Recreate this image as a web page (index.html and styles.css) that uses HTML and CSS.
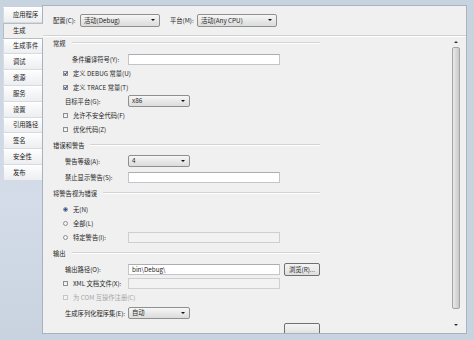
FILE: index.html
```html
<!doctype html>
<html lang="zh-CN">
<head>
  <meta charset="UTF-8">
  <title>项目属性 - 生成</title>
  <link rel="stylesheet" href="styles.css">
</head>
<body>
  <div class="window">
    <div class="sidebar">
      <div class="tab">应用程序</div>
      <div class="tab tab-active">生成</div>
      <div class="tab">生成事件</div>
      <div class="tab">调试</div>
      <div class="tab">资源</div>
      <div class="tab">服务</div>
      <div class="tab">设置</div>
      <div class="tab">引用路径</div>
      <div class="tab">签名</div>
      <div class="tab">安全性</div>
      <div class="tab">发布</div>
    </div>

    <div class="panel">
      <div class="toolbar">
        <span class="tool-label">配置(C):</span>
        <div class="select select-wide">活动(Debug)</div>
        <span class="tool-label tool-label-2">平台(M):</span>
        <div class="select select-wide">活动(Any CPU)</div>
      </div>

      <div class="body">
        <div class="content">
          <div class="section section-first"><span>常规</span><i class="rule"></i></div>
          <div class="row field">
            <span class="label label-indent">条件编译符号(Y):</span>
            <div class="textbox"></div>
          </div>
          <div class="row check"><span class="box checked"></span>定义 DEBUG 常量(U)</div>
          <div class="row check"><span class="box checked"></span>定义 TRACE 常量(T)</div>
          <div class="row field">
            <span class="label">目标平台(G):</span>
            <div class="select">x86</div>
          </div>
          <div class="row check"><span class="box"></span>允许不安全代码(F)</div>
          <div class="row check"><span class="box"></span>优化代码(Z)</div>

          <div class="section"><span>错误和警告</span><i class="rule"></i></div>
          <div class="row field">
            <span class="label">警告等级(A):</span>
            <div class="select">4</div>
          </div>
          <div class="row field mt2">
            <span class="label">禁止显示警告(S):</span>
            <div class="textbox"></div>
          </div>

          <div class="section"><span>将警告视为错误</span><i class="rule"></i></div>
          <div class="row check"><span class="radio selected"></span>无(N)</div>
          <div class="row check"><span class="radio"></span>全部(L)</div>
          <div class="row check">
            <span class="radio"></span><span class="label-short">特定警告(I):</span>
            <div class="textbox disabled"></div>
          </div>

          <div class="section"><span>输出</span><i class="rule"></i></div>
          <div class="row field">
            <span class="label">输出路径(O):</span>
            <div class="textbox">bin\Debug\</div>
            <div class="button">浏览(R)...</div>
          </div>
          <div class="row check">
            <span class="box"></span><span class="label-short">XML 文档文件(X):</span>
            <div class="textbox disabled"></div>
          </div>
          <div class="row check is-disabled"><span class="box"></span>为 COM 互操作注册(C)</div>
          <div class="row field mt2">
            <span class="label">生成序列化程序集(E):</span>
            <div class="select">自动</div>
          </div>
          <div class="row button-row">
            <div class="button"></div>
          </div>
        </div>

        <div class="scrollbar">
          <span class="arrow arrow-up"></span>
          <div class="thumb"></div>
          <span class="arrow arrow-down"></span>
        </div>
      </div>
    </div>
  </div>
</body>
</html>
```

FILE: styles.css
```css
html, body {
    margin: 0;
    height: 340px;
    overflow: hidden;
}

body {
    background: #c8d3e0;
    font-family: "Noto Sans CJK SC", "Noto Sans", sans-serif;
    font-size: 6.3px;
    color: #262626;
}

.window {
    display: flex;
    height: 340px;
    box-sizing: border-box;
    padding: 5px 7px 6px 0;
}

/* left tabs */
.sidebar {
    width: 42px;
    padding-top: 2px;
    padding-left: 3px;
    box-sizing: border-box;
    background: linear-gradient(#c8d3e0, #d3dce8 60%, #c9d3df);
}

.tab {
    height: 15.8px;
    box-sizing: border-box;
    display: flex;
    align-items: center;
    padding-left: 9px;
    background: linear-gradient(#fdfdfd, #eceef1);
    border: 1px solid #d6dbe2;
    border-right: none;
    border-top-color: #fff;
    color: #1a1a1a;
    line-height: 1;
}

.tab-active {
    background: #f0f0f0;
    border-color: #b4bdc8;
    border-right: none;
    margin-right: -1px;
    position: relative;
    z-index: 1;
}

/* main panel */
.panel {
    flex: 1;
    display: flex;
    flex-direction: column;
    background: #f0f0f0;
    border: 1px solid #a9b3bf;
    min-width: 0;
}

.toolbar {
    height: 29px;
    display: flex;
    align-items: center;
    padding-left: 10px;
    border-bottom: 1px solid #d2d2d2;
    box-shadow: 0 1px 0 #fff;
    flex: none;
}

.tool-label {
    width: 27px;
}

.tool-label-2 {
    margin-left: 10px;
}

.body {
    flex: 1;
    display: flex;
    min-height: 0;
}

.content {
    flex: 1;
    padding-left: 10px;
    padding-top: 1px;
    overflow: hidden;
}

.section {
    display: flex;
    align-items: center;
    width: 267px;
    height: 10px;
    margin: 4px 0;
}

.section-first {
    margin-top: 1px;
}

.rule {
    flex: 1;
    margin-left: 6px;
    border-top: 1px solid #d3d3d3;
    border-bottom: 1px solid #fff;
}

.row {
    height: 14px;
    display: flex;
    align-items: center;
    white-space: nowrap;
}

.mt2 {
    margin-top: 2px;
}

.field {
    padding-left: 12px;
}

.label {
    width: 63px;
}

.label-indent {
    width: 56px;
    padding-left: 7px;
}

.check {
    padding-left: 10px;
}

.label-short {
    width: 55px;
}

.is-disabled {
    color: #a6a6a6;
}

/* controls */
.textbox {
    width: 152px;
    height: 11px;
    box-sizing: border-box;
    background: #fff;
    border: 1px solid #c2c5cb;
    border-top-color: #abadb3;
    padding-left: 3px;
    line-height: 9px;
}

.textbox.disabled {
    background: #f2f2f2;
    border-color: #cfcfcf;
}

.select {
    width: 62px;
    height: 12px;
    box-sizing: border-box;
    border: 1px solid #8e8f8f;
    border-radius: 2px;
    background: linear-gradient(#f7f7f7, #e8e8e8 50%, #dcdcdc);
    padding-left: 3px;
    line-height: 10px;
    position: relative;
}

.select::after {
    content: "";
    position: absolute;
    right: 4px;
    top: 4px;
    border-left: 2px solid transparent;
    border-right: 2px solid transparent;
    border-top: 2px solid #111;
}

.select-wide {
    width: 80px;
    height: 13px;
    line-height: 11px;
}

.box {
    width: 5px;
    height: 5px;
    box-sizing: border-box;
    border: 1px solid #8f8f8f;
    background: linear-gradient(#e8e8e8, #fbfbfb);
    margin-right: 5px;
    position: relative;
}

.box.checked::after {
    content: "";
    position: absolute;
    left: 1px;
    top: -1px;
    width: 1px;
    height: 3px;
    border-right: 1px solid #3c4f7e;
    border-bottom: 1px solid #3c4f7e;
    transform: rotate(40deg);
}

.is-disabled .box {
    border-color: #c6c6c6;
    background: #f4f4f4;
}

.radio {
    width: 5px;
    height: 5px;
    box-sizing: border-box;
    border: 1px solid #8f8f8f;
    border-radius: 50%;
    background: #f4f4f4;
    margin-right: 5px;
}

.radio.selected {
    background: radial-gradient(circle, #2f5aa8 0 1.2px, #f4f4f4 1.6px);
}

.button {
    width: 36px;
    height: 13px;
    box-sizing: border-box;
    margin-left: 4px;
    border: 1px solid #707070;
    border-radius: 2px;
    background: linear-gradient(#f3f3f3, #ebebeb 50%, #dddddd);
    display: flex;
    align-items: center;
    justify-content: center;
}

.button-row {
    margin-top: 3px;
    padding-left: 227px;
    align-items: flex-start;
}

/* scrollbar */
.scrollbar {
    width: 8px;
    margin: 3px 6px 5px 0;
    display: flex;
    flex-direction: column;
    align-items: center;
}

.arrow {
    width: 0;
    height: 0;
    border-left: 2px solid transparent;
    border-right: 2px solid transparent;
    margin: 2px 0;
}

.arrow-up {
    border-bottom: 2px solid #333;
}

.arrow-down {
    border-top: 2px solid #333;
}

.thumb {
    flex: 1;
    width: 8px;
    box-sizing: border-box;
    margin: 2px 0 13px;
    border: 1px solid #a4a4a4;
    border-radius: 2px;
    background: linear-gradient(90deg, #e9e9e9, #d6d6d6 60%, #c9c9c9);
}
```
